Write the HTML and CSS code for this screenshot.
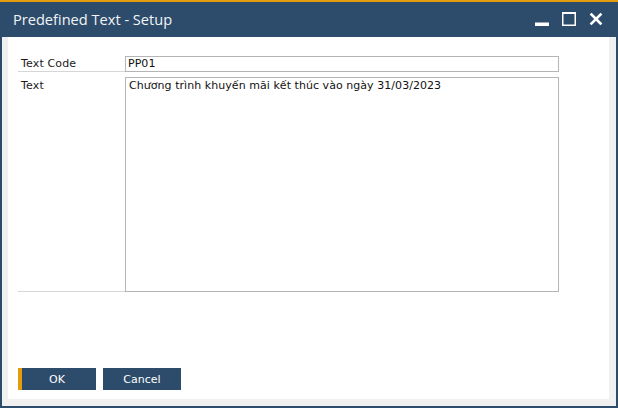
FILE: index.html
```html
<!DOCTYPE html>
<html>
<head>
<meta charset="utf-8">
<link rel="stylesheet" href="styles.css">
</head>
<body>
<div class="window">
  <div class="accent"></div>
  <div class="titlebar">
    <span class="title">Predefined Text - Setup</span>
    <div class="controls">
      <svg class="ctl" width="14" height="14" viewBox="0 0 14 14"><rect x="0" y="10.5" width="14" height="3.5" fill="#fff"/></svg>
      <svg class="ctl" width="14" height="14" viewBox="0 0 14 14"><rect x="0.75" y="1" width="12.5" height="12.25" fill="none" stroke="#fff" stroke-width="1.5"/><rect x="0" y="0" width="14" height="2" fill="#fff"/></svg>
      <svg class="ctl" width="14" height="14" viewBox="0 0 14 14"><path d="M2.5 2.5 L11.5 11.5 M11.5 2.5 L2.5 11.5" stroke="#fff" stroke-width="2.6" stroke-linecap="square"/></svg>
    </div>
  </div>
  <div class="frame">
    <div class="content">
      <div class="form">
        <div class="row">
          <div class="label">Text Code</div>
          <div class="field input">PP01</div>
        </div>
        <div class="row">
          <div class="label tall">Text</div>
          <div class="field area">Chương trình khuyến mãi kết thúc vào ngày 31/03/2023</div>
        </div>
      </div>
      <div class="buttons">
        <div class="btn primary">OK</div>
        <div class="btn">Cancel</div>
      </div>
    </div>
  </div>
</div>
</body>
</html>
```

FILE: styles.css
```css
html, body {
  margin: 0;
  padding: 0;
}
body {
  width: 618px;
  height: 408px;
  overflow: hidden;
  font-family: "DejaVu Sans", sans-serif;
}
.window {
  width: 618px;
  height: 408px;
  display: flex;
  flex-direction: column;
}
.accent {
  height: 2px;
  background: #e29c0c;
}
.titlebar {
  height: 35px;
  background: #2d4c6b;
  display: flex;
  align-items: center;
  justify-content: space-between;
  padding-left: 13px;
  padding-right: 15px;
}
.title {
  color: #f2f4f6;
  font-family: "Open Sans", "Liberation Sans", sans-serif;
  font-size: 14.6px;
  margin-top: -1px;
}
.controls {
  display: flex;
  gap: 13px;
  align-items: center;
  margin-top: -2px;
}
.ctl {
  display: block;
}
.frame {
  flex: 1;
  background: #f0f0f0;
  border: 2px solid #2d4c6b;
  border-top: none;
  padding: 0 7px 7px 6px;
  display: flex;
}
.content {
  flex: 1;
  background: #ffffff;
  display: flex;
  flex-direction: column;
  padding: 19px 0 9px 10px;
}
.form {
  display: flex;
  flex-direction: column;
  gap: 5px;
}
.row {
  display: flex;
}
.label {
  width: 107px;
  box-sizing: border-box;
  padding: 1px 0 0 3px;
  font-size: 11px;
  letter-spacing: 0.15px;
  color: #1a1a1a;
  border-bottom: 1px solid #d6d6d6;
  line-height: 14px;
}
.label.tall {
  padding-top: 2px;
}
.field {
  width: 434px;
  box-sizing: border-box;
  border: 1px solid #b5b5b5;
  font-size: 11px;
  letter-spacing: 0.05px;
  color: #111;
  padding: 0 0 0 2px;
  line-height: 14px;
}
.input {
  height: 16px;
}
.area {
  height: 215px;
  padding-top: 1px;
  padding-left: 3px;
}
.buttons {
  margin-top: auto;
  display: flex;
  gap: 7px;
}
.btn {
  width: 78px;
  height: 22px;
  box-sizing: border-box;
  background: #2d4c6b;
  color: #ffffff;
  font-size: 11px;
  display: flex;
  align-items: center;
  justify-content: center;
}
.btn.primary {
  border-left: 4px solid #e29c0c;
  padding-right: 4px;
}
```
